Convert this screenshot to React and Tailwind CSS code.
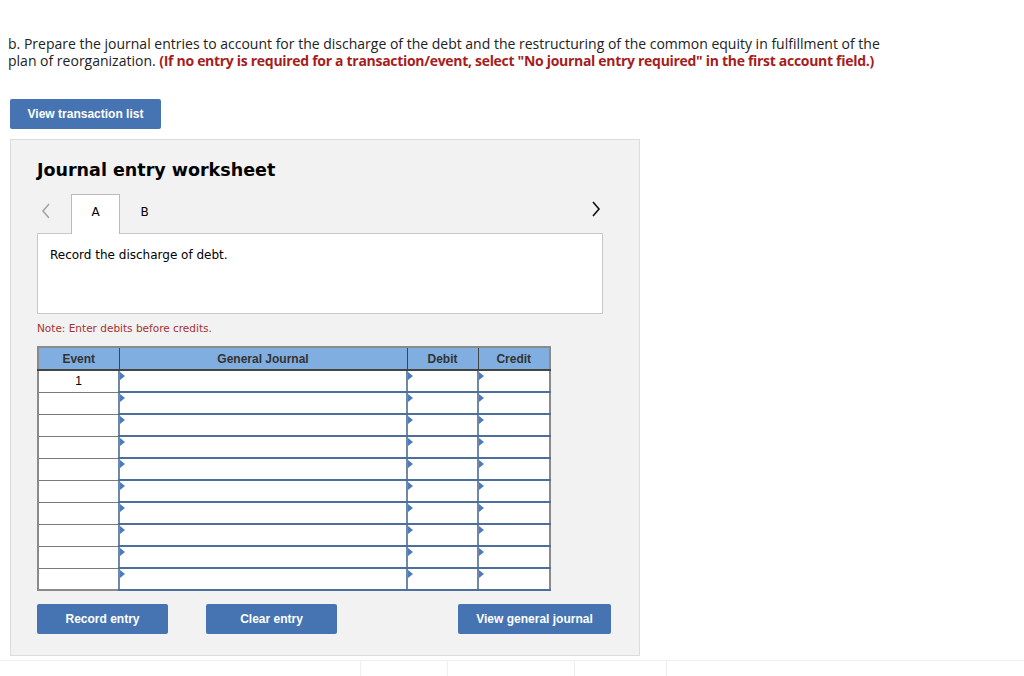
import React from 'react';

const rows = Array.from({ length: 10 }, (_, i) => i);

const Marker = () => (
  <span className="absolute left-0 top-[1px] w-0 h-0 border-t-[4px] border-b-[4px] border-l-[5px] border-t-transparent border-b-transparent border-l-[#4a7cc0]" />
);

const InputCell = ({ w }) => (
  <td className={`relative ${w} h-[22px] p-0 bg-white border-y-2 border-y-[#4d6f9e] border-l-2 border-l-[#6f87a8] border-r border-r-[#6f87a8]`}>
    <Marker />
  </td>
);

export default function App() {
  return (
    <div className="w-[1024px] h-[676px] bg-white overflow-hidden text-[#222]" style={{ fontFamily: '"Liberation Sans", Arial, sans-serif' }}>
      <div className="pt-[35px] pl-[8px] text-[14px] leading-[17px] whitespace-nowrap" style={{ fontFamily: '"Open Sans", sans-serif' }}>
        <div>b. Prepare the journal entries to account for the discharge of the debt and the restructuring of the common equity in fulfillment of the</div>
        <div>
          plan of reorganization.{' '}
          <span className="font-bold text-[#a61d1d] tracking-[-0.3px]">(If no entry is required for a transaction/event, select "No journal entry required" in the first account field.)</span>
        </div>
      </div>

      <button className="mt-[30px] ml-[10px] w-[151px] h-[30px] rounded-[2px] bg-[#4674b3] text-white text-[12px] font-bold">
        View transaction list
      </button>

      <div className="mt-[10px] ml-[10px] w-[630px] h-[517px] bg-[#f2f2f2] border border-[#dcdcdc] pl-[26px] pr-[36px]">
        <h2 className="mt-[17px] text-[17.5px] font-bold text-black" style={{ fontFamily: '"DejaVu Sans", Verdana, sans-serif' }}>
          Journal entry worksheet
        </h2>

        <div className="mt-[12px] flex items-end h-[39px]" style={{ fontFamily: '"DejaVu Sans", Verdana, sans-serif' }}>
          <span className="w-[34px] pl-[4px] pb-[15px] text-[#aaa] text-[20px] leading-none">
            <svg width="10" height="16" viewBox="0 0 10 16"><path d="M8 1 L2 8 L8 15" fill="none" stroke="#a5a5a5" strokeWidth="1.6" /></svg>
          </span>
          <div className="relative z-10 w-[49px] h-[40px] bg-white border border-[#bbb] border-b-0 flex items-center justify-center text-[12px] text-black pb-[6px]">A</div>
          <div className="w-[49px] h-[39px] flex items-center justify-center text-[12px] text-black pb-[6px]">B</div>
          <div className="flex-1" />
          <span className="pb-[17px] pr-[2px]">
            <svg width="10" height="16" viewBox="0 0 10 16"><path d="M2 1 L8 8 L2 15" fill="none" stroke="#111" strokeWidth="1.6" /></svg>
          </span>
        </div>

        <div className="-mt-[1px] w-[566px] h-[81px] bg-white border border-[#c8c8c8] px-[12px] pt-[12px] text-[12px] text-black" style={{ fontFamily: '"DejaVu Sans", Verdana, sans-serif' }}>
          Record the discharge of debt.
        </div>

        <p className="mt-[7px] text-[10.5px] text-[#a33232]" style={{ fontFamily: '"DejaVu Sans", Verdana, sans-serif' }}>
          Note: Enter debits before credits.
        </p>

        <table className="mt-[9px] border-collapse border-2 border-[#8a8a8a]" style={{ fontFamily: '"Liberation Sans", Arial, sans-serif' }}>
          <thead>
            <tr className="h-[23px] bg-[#80aee0] text-[12px] font-bold text-[#333]">
              <th className="w-[81px] border border-[#444] border-b-2 border-b-[#444] font-bold">Event</th>
              <th className="w-[288px] border border-[#444] border-b-2 border-b-[#444] font-bold">General Journal</th>
              <th className="w-[71px] border border-[#444] border-b-2 border-b-[#444] font-bold">Debit</th>
              <th className="w-[72px] border border-[#444] border-b-2 border-b-[#444] font-bold">Credit</th>
            </tr>
          </thead>
          <tbody>
            {rows.map((i) => (
              <tr key={i}>
                <td className="w-[81px] h-[22px] p-0 bg-white border border-[#7a7a7a] text-center text-[12px] text-black align-top pt-[1px]">
                  {i === 0 ? '1' : ''}
                </td>
                <InputCell w="w-[288px]" />
                <InputCell w="w-[71px]" />
                <InputCell w="w-[72px]" />
              </tr>
            ))}
          </tbody>
        </table>

        <div className="mt-[13px] flex items-center">
          <button className="w-[131px] h-[30px] rounded-[2px] bg-[#4674b3] text-white text-[12px] font-bold">Record entry</button>
          <button className="ml-[38px] w-[131px] h-[30px] rounded-[2px] bg-[#4674b3] text-white text-[12px] font-bold">Clear entry</button>
          <div className="flex-1" />
          <button className="w-[153px] h-[30px] rounded-[2px] bg-[#4674b3] text-white text-[12px] font-bold -mr-[8px]">View general journal</button>
        </div>
      </div>

      <div className="mt-[4px] h-[20px] border-t border-[#eee] flex">
        <div className="w-[361px] border-r border-[#eee]" />
        <div className="w-[87px] border-r border-[#eee]" />
        <div className="w-[127px] border-r border-[#eee]" />
        <div className="w-[92px] border-r border-[#eee]" />
      </div>
    </div>
  );
}
